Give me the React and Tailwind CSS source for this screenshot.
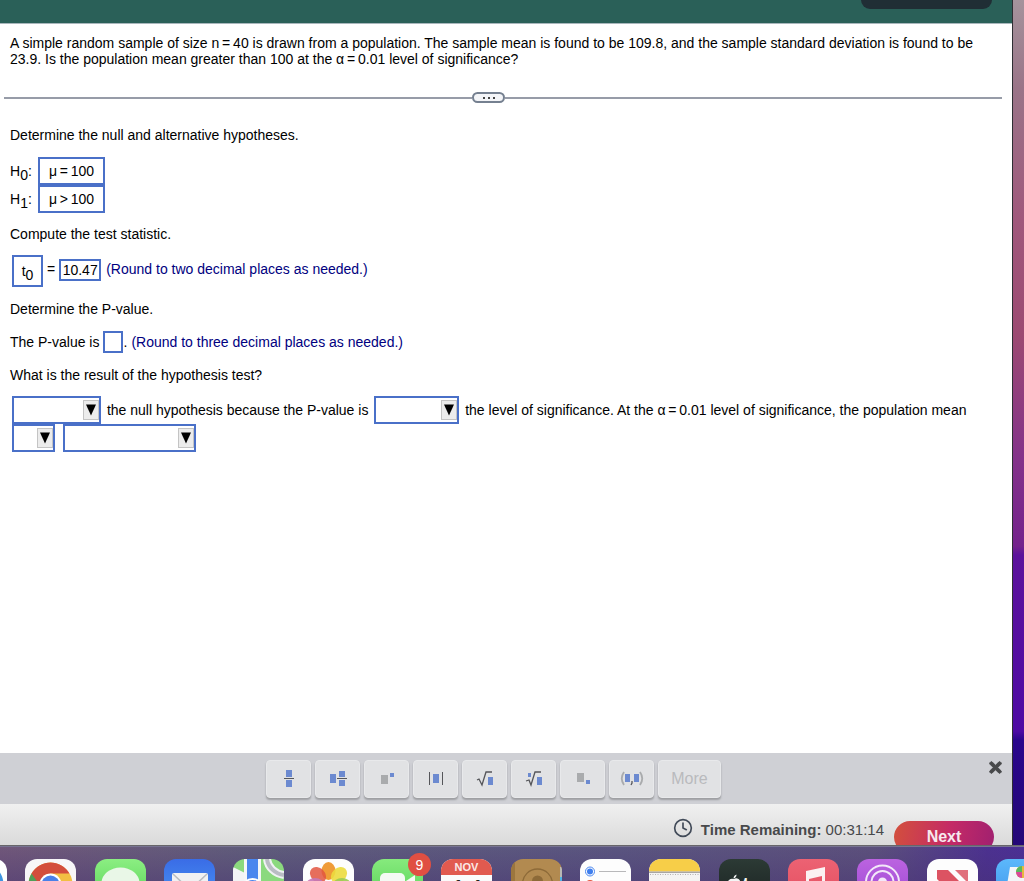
import { FaTimes } from 'react-icons/fa';
import { Clock } from 'lucide-react';

const BLUE = '#6c8ad0';
const GRAY = '#a9abad';
const INK = '#55565a';

const Hint = ({ children }) => <span className="text-[#000080]">{children}</span>;

const DropDown = ({ label, className }) => (
  <span className={`relative inline-block h-7 mx-0.5 align-top ${className}`}>
    <select
      aria-label={label}
      className="block w-full h-full appearance-none border-2 border-[#4a70c8] bg-white px-1"
    >
      <option value=""></option>
    </select>
    <span className="pointer-events-none absolute right-0.5 top-1 flex h-5 w-4 items-center justify-center border border-[#c4c4c4] bg-[#ececec]">
      <svg width="10" height="12" viewBox="0 0 10 12">
        <path d="M0 0.500H10L5 11.500Z" fill="#000" />
      </svg>
    </span>
  </span>
);

const Hypothesis = ({ id, sub, value }) => (
  <div className="flex items-center">
    <label htmlFor={id} className="w-7">
      H<sub className="text-sm leading-none bottom-[-4px]">{sub}</sub>:
    </label>
    <input
      id={id}
      defaultValue={value}
      className="h-7 w-[67px] border-2 border-[#4a70c8] bg-white text-center"
    />
  </div>
);

const mathKeys = [
  {
    name: 'Fraction',
    art: (
      <>
        <rect x="9" y="1" width="6" height="7" fill={BLUE} />
        <rect x="7" y="9" width="10" height="1" fill={INK} />
        <rect x="9" y="11" width="6" height="7" fill={BLUE} />
      </>
    ),
  },
  {
    name: 'Mixed number',
    art: (
      <>
        <rect x="4" y="5" width="6" height="9" fill={BLUE} />
        <rect x="13" y="2" width="6" height="6" fill={BLUE} />
        <rect x="11" y="9" width="10" height="1" fill={INK} />
        <rect x="13" y="11" width="6" height="6" fill={BLUE} />
      </>
    ),
  },
  {
    name: 'Exponent',
    art: (
      <>
        <rect x="6" y="6" width="7" height="9" fill={GRAY} />
        <rect x="15" y="4" width="4" height="4" fill={BLUE} />
      </>
    ),
  },
  {
    name: 'Absolute value',
    art: (
      <>
        <rect x="5" y="3" width="1" height="13" fill={INK} />
        <rect x="9" y="5" width="6" height="9" fill={BLUE} />
        <rect x="18" y="3" width="1" height="13" fill={INK} />
      </>
    ),
  },
  {
    name: 'Square root',
    art: (
      <>
        <path d="M4 11L6 10L9 16L13 3H19" fill="none" stroke={INK} strokeWidth="1.300" />
        <rect x="15" y="8" width="5" height="8" fill={BLUE} />
      </>
    ),
  },
  {
    name: 'Nth root',
    art: (
      <>
        <rect x="6" y="4" width="3" height="4" fill={BLUE} />
        <path d="M4 12L7 11L9 16L13 3H19" fill="none" stroke={INK} strokeWidth="1.300" />
        <rect x="15" y="8" width="5" height="8" fill={BLUE} />
      </>
    ),
  },
  {
    name: 'Subscript',
    art: (
      <>
        <rect x="6" y="4" width="7" height="9" fill={GRAY} />
        <rect x="15" y="11" width="4" height="4" fill={BLUE} />
      </>
    ),
  },
  {
    name: 'Ordered pair',
    art: (
      <>
        <path d="M4 3Q-0.500 9.500 4 16M20 3Q24.500 9.500 20 16" fill="none" stroke={GRAY} strokeWidth="1.800" />
        <rect x="5" y="5" width="5" height="8" fill={BLUE} />
        <path d="M12 12V14L11 16" fill="none" stroke={INK} strokeWidth="1.300" />
        <rect x="14" y="5" width="5" height="8" fill={BLUE} />
      </>
    ),
  },
];

const keyClass =
  'h-[38px] rounded-sm border border-[#e8e9eb] bg-[#e1e2e4] shadow-[0_2px_2px_#9c9da1] flex items-center justify-center';

const MathToolbar = () => (
  <div className="flex h-[51px] bg-[#cfd0d5] pr-2">
    <div className="flex flex-1 items-center justify-center gap-1">
      {mathKeys.map((key) => (
        <button key={key.name} type="button" aria-label={key.name} className={`w-[45px] ${keyClass}`}>
          <svg width="24" height="19" viewBox="0 0 24 19">{key.art}</svg>
        </button>
      ))}
      <button type="button" className={`w-[63px] text-base text-[#b9babd] ${keyClass}`}>
        More
      </button>
    </div>
    <button type="button" aria-label="Close" className="self-start pt-1.5 text-[#48494b]">
      <FaTimes size={17} strokeWidth={30} stroke="currentColor" />
    </button>
  </div>
);

// Dock icons, each drawn on a 51 x 51 tile; the lower half hangs off the screen
const dockApps = [
  {
    name: 'Safari',
    tile: 'bg-white',
    art: <circle cx="25.500" cy="25.500" r="22" fill="#3f94e0" />,
  },
  {
    name: 'Chrome',
    tile: 'bg-[#f7f6f8]',
    art: (
      <>
        <circle cx="25.500" cy="25.500" r="22" fill="#f2be42" />
        <path d="M25.500 25.500L6.500 14.500A22 22 0 0 0 25.500 47.500Z" fill="#4f9f58" />
        <path d="M6.500 14.500A22 22 0 0 1 44.500 14.500H25.500L16 28Z" fill="#d34d3c" />
        <circle cx="25.500" cy="25.500" r="11" fill="#fff" />
        <circle cx="25.500" cy="25.500" r="9" fill="#4a80e8" />
      </>
    ),
  },
  {
    name: 'Messages',
    tile: 'bg-gradient-to-b from-[#8bee82] to-[#4ccf4f]',
    art: <ellipse cx="25.500" cy="24" rx="19" ry="15.500" fill="#e9f7e7" />,
  },
  {
    name: 'Mail',
    tile: 'bg-gradient-to-b from-[#3a6ce6] to-[#4f9cf5]',
    art: (
      <>
        <rect x="8" y="14" width="36" height="25" rx="2" fill="#f1f1f2" />
        <path d="M9 15L26 31L43 15" fill="none" stroke="#b9bcc0" strokeWidth="1.500" />
      </>
    ),
  },
  {
    name: 'Maps',
    tile: 'bg-[#8bd97e]',
    art: (
      <>
        <path d="M0 8L12 14V30H0Z" fill="#f3f4f5" />
        <rect x="11" y="0" width="17" height="51" fill="#f5f6f7" />
        <rect x="14" y="0" width="11" height="51" fill="#4a86ee" />
        <path d="M34 0A20 18 0 0 0 51 16" fill="none" stroke="#f0f1f3" strokeWidth="8" />
        <path d="M34 0A20 18 0 0 0 51 16" fill="none" stroke="#b9bcc3" strokeWidth="4" />
        <circle cx="19.500" cy="30" r="11" fill="#fff" />
        <circle cx="19.500" cy="30" r="9" fill="#4a86ee" />
      </>
    ),
  },
  {
    name: 'Photos',
    tile: 'bg-[#fdfdfd]',
    art: (
      <>
        <ellipse cx="25.500" cy="12" rx="7" ry="9" fill="#ef9b38" />
        <ellipse cx="36" cy="16" rx="7" ry="9" transform="rotate(45 36 16)" fill="#ecdc3e" fillOpacity="0.900" />
        <ellipse cx="15" cy="16" rx="7" ry="9" transform="rotate(-45 15 16)" fill="#e2553f" fillOpacity="0.850" />
        <ellipse cx="39" cy="26" rx="9" ry="7" fill="#9bcb52" fillOpacity="0.900" />
        <ellipse cx="12" cy="26" rx="9" ry="7" fill="#c478b8" fillOpacity="0.900" />
      </>
    ),
  },
  {
    name: 'FaceTime',
    tile: 'bg-gradient-to-b from-[#86ea7d] to-[#4ccf4f]',
    badge: 9,
    art: (
      <>
        <rect x="8" y="14" width="25" height="24" rx="5" fill="#f5faf4" />
        <path d="M34 22L43 16V36L34 30Z" fill="#f5faf4" />
      </>
    ),
  },
  {
    name: 'Calendar',
    tile: 'bg-[#fbfbfb]',
    art: (
      <>
        <rect width="51" height="16" fill="#e15a4f" />
        <text x="25.500" y="12" textAnchor="middle" fontSize="11" fontWeight="700" fill="#fbe9e7">
          NOV
        </text>
        <text x="25.500" y="41" textAnchor="middle" fontSize="30" fill="#222">
          14
        </text>
      </>
    ),
  },
  {
    name: 'Contacts',
    tile: 'bg-[#b28a50]',
    art: (
      <>
        <rect width="4" height="51" fill="#9c763e" />
        <rect x="49" y="8" width="2" height="10" fill="#b9b9b4" />
        <rect x="49" y="18" width="2" height="12" fill="#4fb4e6" />
        <circle cx="26.500" cy="25" r="15" fill="none" stroke="#8d6a38" strokeWidth="1.300" />
        <circle cx="26.500" cy="22" r="5.500" fill="#8d6a38" />
      </>
    ),
  },
  {
    name: 'Reminders',
    tile: 'bg-[#fdfdfd]',
    art: (
      <>
        <circle cx="10" cy="12.500" r="4.500" fill="#fff" stroke="#4a86ee" />
        <circle cx="10" cy="12.500" r="3" fill="#3e7eee" />
        <rect x="19" y="12" width="27" height="1" fill="#b8b8ba" />
        <circle cx="10" cy="25" r="4" fill="#e0553f" />
      </>
    ),
  },
  {
    name: 'Notes',
    tile: 'bg-[#f5f4f2]',
    art: (
      <>
        <rect width="51" height="12.500" fill="#f7ce48" />
        <rect y="12.500" width="51" height="1.500" fill="#a9a6a2" />
        <path d="M1 15.500H51" stroke="#b5b3b0" strokeDasharray="1 1.500" />
      </>
    ),
  },
  {
    name: 'Apple TV',
    tile: 'bg-gradient-to-b from-[#2c3a35] to-[#18201f]',
    art: (
      <>
        <path
          d="M15 20Q17 18.500 19.500 20Q21 21 21 22Q18.500 24 19 27Q19.500 29 21 30Q18 36 15 34Q12 36 9.500 31Q7 24 10 21Q12 19 15 20Z"
          fill="#f4f5f5"
        />
        <path d="M14.500 19.500Q14.500 16.500 17.500 15.500Q17.500 18.500 14.500 19.500Z" fill="#f4f5f5" />
        <text x="23" y="34" fontSize="22" fontWeight="700" fill="#f4f5f5">
          tv
        </text>
      </>
    ),
  },
  {
    name: 'Music',
    tile: 'bg-gradient-to-b from-[#ec6273] to-[#e34b5c]',
    art: (
      <>
        <path d="M18 34V12L37 8V30H34V17L21 20V34Z" fill="#fbf1f2" />
        <ellipse cx="17" cy="34" rx="4.500" ry="4" fill="#fbf1f2" />
      </>
    ),
  },
  {
    name: 'Podcasts',
    tile: 'bg-gradient-to-b from-[#bb63e0] to-[#9a45d2]',
    art: (
      <>
        <circle cx="25.500" cy="23" r="16.500" fill="none" stroke="#f3e8f9" strokeWidth="2" />
        <circle cx="25.500" cy="23" r="11" fill="none" stroke="#f3e8f9" strokeWidth="2" />
        <circle cx="25.500" cy="23" r="4.500" fill="#f3e8f9" />
      </>
    ),
  },
  {
    name: 'News',
    tile: 'bg-[#fdfdfd]',
    art: (
      <>
        <path d="M10 11H21L41 31V41H31L10 20Z" fill="#dc5362" />
        <path d="M28 11H41V24Z" fill="#e0707c" />
      </>
    ),
  },
  {
    name: 'Keynote',
    tile: 'bg-gradient-to-b from-[#5cb8fb] to-[#3b8fe8]',
    art: (
      <>
        <path d="M14 8H51V32H10Z" fill="#f4f6f8" />
        <circle cx="26" cy="13" r="6" fill="#e6b93c" />
        <path d="M26 13V7A6 6 0 0 0 20 13Z" fill="#56b95f" />
        <path d="M26 13H20A6 6 0 0 0 26 19Z" fill="#d8499a" />
      </>
    ),
  },
];

const Dock = () => (
  <nav
    aria-label="Dock"
    className="h-9 shrink-0 overflow-hidden border-t border-[#68666a] bg-[linear-gradient(100deg,#70577a_0%,#5f5c7b_25%,#5a5580_60%,#5c507c_85%,#4c3190_96%,#4b2f96_100%)]"
  >
    <div className="h-full border-t border-[#777391] bg-gradient-to-b from-transparent to-[#45307066]">
      <ul className="-ml-[44px] -mr-[23px] flex justify-between pt-3">
        {dockApps.map((app) => (
          <li key={app.name} className="relative shrink-0">
            <button
              type="button"
              aria-label={app.name}
              className={`block size-[51px] overflow-hidden rounded-xl ${app.tile}`}
            >
              <svg width="51" height="51" viewBox="0 0 51 51">{app.art}</svg>
            </button>
            {app.badge && (
              <span className="absolute -right-2 -top-1.5 flex size-[23px] items-center justify-center rounded-full bg-[#e04f42] text-sm text-white">
                {app.badge}
              </span>
            )}
          </li>
        ))}
      </ul>
    </div>
  </nav>
);

const App = () => {
  return (
    <div className="flex h-screen flex-col overflow-hidden bg-[linear-gradient(to_bottom,#a5939c_0%,#9a7488_10%,#a0587c_25%,#9c4a72_38%,#84328a_52%,#74228c_62%,#5c129c_63%,#4e0aa4_83%,#2a068c_84%,#220870_100%)] font-['Liberation_Sans',Arial,sans-serif] text-sm text-black">
      <div className="mr-[11px] flex min-h-0 flex-1 flex-col overflow-hidden border-r border-[#2e2e33] bg-white">
        <header className="flex h-6 shrink-0 justify-end border-b border-[#a9b7bc] bg-[#2a6058] pr-5">
          <div className="h-[9px] w-[131px] rounded-b-2xl bg-[#202e35]" />
        </header>

        <main className="flex-1">
          <p className="px-2.5 pt-[11px] leading-4">
            A simple random sample of size n&#8201;=&#8201;40 is drawn from a population. The sample mean is found
            to be 109.8, and the sample standard deviation is found to be 23.9. Is the population mean greater
            than 100 at the α&#8201;=&#8201;0.01 level of significance?
          </p>

          {/* Divider with drag handle */}
          <div className="ml-1 mr-2.5 mt-[25px] flex items-center">
            <div className="h-0.5 w-[468px] bg-[#979ca8]" />
            <button
              type="button"
              aria-label="Resize"
              className="flex h-[11px] w-[33px] items-center justify-center gap-[3px] rounded-full border-2 border-[#758090] bg-[#f4f5f8]"
            >
              <span className="size-0.5 bg-[#444]" />
              <span className="size-0.5 bg-[#444]" />
              <span className="size-0.5 bg-[#444]" />
            </button>
            <div className="h-0.5 flex-1 bg-[#979ca8]" />
          </div>

          <div className="px-2.5 pt-6">
            <p className="leading-4">Determine the null and alternative hypotheses.</p>
            <div className="mt-[14px]">
              <Hypothesis id="h0" sub="0" value="μ&#8201;=&#8201;100" />
              <Hypothesis id="h1" sub="1" value="μ&#8201;>&#8201;100" />
            </div>

            <p className="mt-[13px] leading-4">Compute the test statistic.</p>
            <div className="mt-[13px] flex items-start leading-7">
              <button type="button" className="ml-0.5 h-8 w-[31px] border-2 border-[#4a70c8] bg-white leading-6">
                t<sub className="text-sm leading-none bottom-[-4px]">0</sub>
              </button>
              <label htmlFor="stat" className="mx-1">=</label>
              <input
                id="stat"
                defaultValue="10.47"
                className="mr-[5px] mt-1 h-[22px] w-[42px] border-2 border-[#4a70c8] bg-white text-center"
              />
              <Hint>(Round to two decimal places as needed.)</Hint>
            </div>

            <p className="mt-[14px] leading-4">Determine the P-value.</p>
            <div className="mt-[14px] flex items-center">
              <label htmlFor="pvalue">The P-value is</label>
              <input id="pvalue" className="ml-1 h-[22px] w-5 border-2 border-[#4a70c8] bg-white" />
              <span className="mr-1">.</span>
              <Hint>(Round to three decimal places as needed.)</Hint>
            </div>

            <p className="mt-[14px] leading-4">What is the result of the hypothesis test?</p>
            <p className="mt-[13px] pr-4 leading-7">
              <DropDown label="Decision" className="w-[89px]" /> the null hypothesis because the P-value is{' '}
              <DropDown label="Comparison" className="w-[85px]" /> the level of significance. At the
              α&#8201;=&#8201;0.01 level of significance, the population mean{' '}
              <DropDown label="Verb" className="w-[43px]" />{' '}
              <DropDown label="Conclusion" className="w-[133px]" />
            </p>
          </div>
        </main>

        <MathToolbar />

        <footer className="flex h-[41px] shrink-0 justify-end overflow-hidden bg-gradient-to-b from-[#f0f0f0] to-[#dadada] pr-[18px] text-[#48494b]">
          <Clock size={20} strokeWidth={2} className="mr-2 mt-[14px] text-[#414a58]" />
          <p className="mr-2.5 mt-4 text-[15px] leading-5">
            <b>Time Remaining:</b> 00:31:14
          </p>
          <button
            type="button"
            className="mt-[17px] h-8 w-[100px] rounded-full bg-[linear-gradient(100deg,#d3503c,#c42a66_55%,#a02070)] text-base font-bold text-[#f7e9ee]"
          >
            Next
          </button>
        </footer>
      </div>

      <Dock />
    </div>
  );
};

export default App;
